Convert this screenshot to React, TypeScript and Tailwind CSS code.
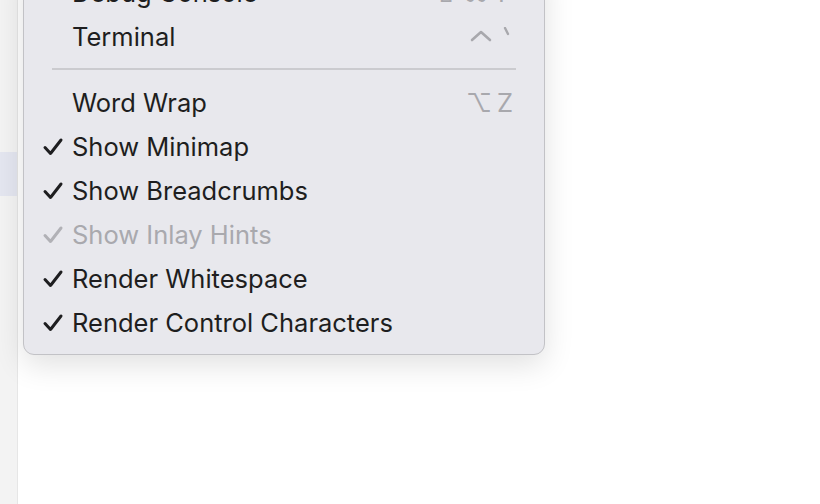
import React from "react";

function Check({ dim }: { dim?: boolean }) {
  return (
    <svg width="22" height="20" viewBox="0 0 22 20" className="shrink-0">
      <path
        d="M3 10.5 L8.5 16.5 L19 3"
        fill="none"
        stroke={dim ? "#b1b1b6" : "#1e1e20"}
        strokeWidth="3"
        strokeLinecap="round"
        strokeLinejoin="round"
      />
    </svg>
  );
}

function CtrlBacktick() {
  return (
    <svg width="44" height="20" viewBox="0 0 44 20" className="shrink-0">
      <path d="M2 13 L11 5 L20 13" fill="none" stroke="#a8a8ad" strokeWidth="2.6" strokeLinecap="round" strokeLinejoin="round" />
      <path d="M35 1 L38 7" fill="none" stroke="#a8a8ad" strokeWidth="2.4" strokeLinecap="round" />
    </svg>
  );
}

type Item = { label: string; checked?: boolean; dim?: boolean; shortcut?: React.ReactNode };

function Row({ item }: { item: Item }) {
  return (
    <div className="flex h-[44px] items-center pl-[18px] pr-[30px]">
      <div className="w-[30px] flex items-center">{item.checked && <Check dim={item.dim} />}</div>
      <span className={`flex-1 ${item.dim ? "text-[#a9a9ae]" : "text-[#1e1e20]"}`}>{item.label}</span>
      {item.shortcut && (
        <span className="text-[#a8a8ad] flex items-center" style={{ fontFamily: "Inter, 'DejaVu Sans', sans-serif" }}>
          {item.shortcut}
        </span>
      )}
    </div>
  );
}

export default function App() {
  const top: Item[] = [
    { label: "Debug Console", shortcut: <span className="tracking-[4px]">⇧⌘Y</span> },
    { label: "Terminal", shortcut: <CtrlBacktick /> },
  ];
  const bottom: Item[] = [
    { label: "Word Wrap", shortcut: <span className="tracking-[5px] mr-[-4px]">⌥Z</span> },
    { label: "Show Minimap", checked: true },
    { label: "Show Breadcrumbs", checked: true },
    { label: "Show Inlay Hints", checked: true, dim: true },
    { label: "Render Whitespace", checked: true },
    { label: "Render Control Characters", checked: true },
  ];
  return (
    <div
      className="relative w-[820px] h-[504px] overflow-hidden bg-white flex"
      style={{ fontFamily: "Inter, 'Liberation Sans', sans-serif" }}
    >
      <div className="w-[18px] h-full bg-[#f3f3f3] border-r border-[#e6e6e6] pt-[152px]">
        <div className="h-[44px] bg-[#e4e6f0]" />
      </div>
      <div className="flex-1" />
      <div className="absolute left-[23px] top-[-39px] w-[522px] rounded-[11px] bg-[#e8e8ed] border border-[#c2c2c6] pt-[9px] pb-[9px] text-[25.5px] shadow-[0_10px_30px_rgba(0,0,0,0.12)]">
        {top.map((it) => (
          <Row key={it.label} item={it} />
        ))}
        <div className="h-[22px] flex items-start pt-[9px] px-[28px]">
          <div className="h-[2px] w-full bg-[#cbcbcf]" />
        </div>
        {bottom.map((it) => (
          <Row key={it.label} item={it} />
        ))}
      </div>
    </div>
  );
}
